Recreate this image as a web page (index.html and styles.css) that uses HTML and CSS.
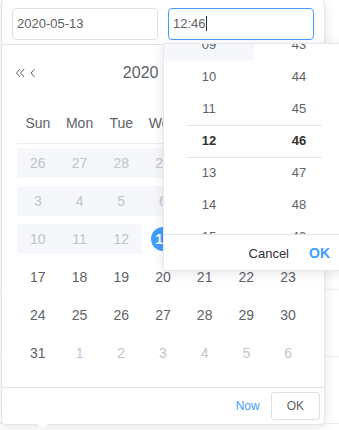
FILE: index.html
```html
<!DOCTYPE html>
<html>
<head>
  <title>Date Time Picker</title>
  <link rel="stylesheet" href="styles.css">
</head>
<body>
  <div class="page">
    <div class="page-row"></div>
    <div class="page-row"></div>
    <div class="page-row"></div>
  </div>

  <div class="picker">
    <div class="time-header">
      <div class="editor-wrap">
        <div class="editor">2020-05-13</div>
      </div>
      <div class="editor-wrap time-wrap">
        <div class="editor is-focus">12:46<span class="caret"></span></div>

        <div class="time-panel">
          <div class="time-content">
            <ul class="spinner">
              <li class="hover">09</li>
              <li>10</li>
              <li>11</li>
              <li class="active">12</li>
              <li>13</li>
              <li>14</li>
              <li>15</li>
            </ul>
            <ul class="spinner">
              <li>43</li>
              <li>44</li>
              <li>45</li>
              <li class="active">46</li>
              <li>47</li>
              <li>48</li>
              <li>49</li>
            </ul>
          </div>
          <div class="time-footer">
            <button class="time-btn">Cancel</button>
            <button class="time-btn confirm">OK</button>
          </div>
        </div>
      </div>
    </div>

    <div class="date-header">
      <div class="icon-group">
        <button class="icon-btn">
          <svg width="12" height="12" viewBox="0 0 12 12"><path d="M6 2 L2.5 6 L6 10 M10 2 L6.5 6 L10 10" fill="none" stroke="#606266" stroke-width="1"/></svg>
        </button>
        <button class="icon-btn">
          <svg width="12" height="12" viewBox="0 0 12 12"><path d="M7.5 2 L4 6 L7.5 10" fill="none" stroke="#606266" stroke-width="1"/></svg>
        </button>
      </div>
      <div class="header-title">
        <span class="header-label">2020</span> <span class="header-label">May</span>
      </div>
      <div class="icon-group">
        <button class="icon-btn">
          <svg width="12" height="12" viewBox="0 0 12 12"><path d="M4.5 2 L8 6 L4.5 10" fill="none" stroke="#606266" stroke-width="1"/></svg>
        </button>
        <button class="icon-btn">
          <svg width="12" height="12" viewBox="0 0 12 12"><path d="M2 2 L5.5 6 L2 10 M6 2 L9.5 6 L6 10" fill="none" stroke="#606266" stroke-width="1"/></svg>
        </button>
      </div>
    </div>

    <div class="panel-content">
      <table class="date-table">
        <tr>
          <th>Sun</th><th>Mon</th><th>Tue</th><th>Wed</th><th>Thu</th><th>Fri</th><th>Sat</th>
        </tr>
        <tr>
          <td class="disabled"><div><span>26</span></div></td>
          <td class="disabled"><div><span>27</span></div></td>
          <td class="disabled"><div><span>28</span></div></td>
          <td class="disabled"><div><span>29</span></div></td>
          <td class="disabled"><div><span>30</span></div></td>
          <td class="disabled"><div><span>1</span></div></td>
          <td class="disabled"><div><span>2</span></div></td>
        </tr>
        <tr>
          <td class="disabled"><div><span>3</span></div></td>
          <td class="disabled"><div><span>4</span></div></td>
          <td class="disabled"><div><span>5</span></div></td>
          <td class="disabled"><div><span>6</span></div></td>
          <td class="disabled"><div><span>7</span></div></td>
          <td class="disabled"><div><span>8</span></div></td>
          <td class="disabled"><div><span>9</span></div></td>
        </tr>
        <tr>
          <td class="disabled"><div><span>10</span></div></td>
          <td class="disabled"><div><span>11</span></div></td>
          <td class="disabled"><div><span>12</span></div></td>
          <td class="current"><div><span>13</span></div></td>
          <td><div><span>14</span></div></td>
          <td><div><span>15</span></div></td>
          <td><div><span>16</span></div></td>
        </tr>
        <tr>
          <td><div><span>17</span></div></td>
          <td><div><span>18</span></div></td>
          <td><div><span>19</span></div></td>
          <td><div><span>20</span></div></td>
          <td><div><span>21</span></div></td>
          <td><div><span>22</span></div></td>
          <td><div><span>23</span></div></td>
        </tr>
        <tr>
          <td><div><span>24</span></div></td>
          <td><div><span>25</span></div></td>
          <td><div><span>26</span></div></td>
          <td><div><span>27</span></div></td>
          <td><div><span>28</span></div></td>
          <td><div><span>29</span></div></td>
          <td><div><span>30</span></div></td>
        </tr>
        <tr>
          <td><div><span>31</span></div></td>
          <td class="next-month"><div><span>1</span></div></td>
          <td class="next-month"><div><span>2</span></div></td>
          <td class="next-month"><div><span>3</span></div></td>
          <td class="next-month"><div><span>4</span></div></td>
          <td class="next-month"><div><span>5</span></div></td>
          <td class="next-month"><div><span>6</span></div></td>
        </tr>
      </table>
    </div>

    <div class="panel-footer">
      <button class="link-btn">Now</button>
      <button class="ok-btn">OK</button>
    </div>

    <div class="arrow"></div>
  </div>
</body>
</html>
```

FILE: styles.css
```css
html, body {
  overflow: hidden;
}
body {
  margin: 0;
  width: 339px;
  height: 430px;
  position: relative;
  font-family: "Liberation Sans", Arial, sans-serif;
  background-color: #fff;
}
.page {
  padding-top: 223px;
}
.page-row {
  height: 66px;
  border-bottom: 1px solid #ebeef5;
}
.picker {
  position: absolute;
  left: 1px;
  top: -1px;
  width: 322px;
  background-color: #fff;
  border: 1px solid #e4e7ed;
  border-radius: 4px;
  box-shadow: 0 2px 12px 0 rgba(0, 0, 0, 0.1);
  color: #606266;
}
.time-header {
  display: flex;
  padding: 8px 5px 4px;
  border-bottom: 1px solid #e4e4e4;
}
.editor-wrap {
  flex: 1;
  padding: 0 5px;
}
.time-wrap {
  position: relative;
}
.editor {
  height: 32px;
  box-sizing: border-box;
  border: 1px solid #dcdfe6;
  border-radius: 4px;
  padding: 0 4px;
  font-size: 13px;
  line-height: 30px;
  color: #606266;
}
.editor.is-focus {
  border-color: #409eff;
}
.caret {
  display: inline-block;
  width: 1px;
  height: 15px;
  background-color: #303133;
  vertical-align: -3px;
}
.time-panel {
  position: absolute;
  left: 0;
  top: calc(100% + 3px);
  z-index: 10;
  width: 180px;
  background-color: #fff;
  border: 1px solid #e4e7ed;
  border-radius: 2px;
  box-shadow: 0 2px 12px 0 rgba(0, 0, 0, 0.1);
}
.time-content {
  position: relative;
  display: flex;
  height: 190px;
  overflow: hidden;
}
.time-content:before {
  content: "";
  position: absolute;
  left: 12%;
  right: 12%;
  top: 81px;
  height: 33px;
  box-sizing: border-box;
  border-top: 1px solid #e4e7ed;
  border-bottom: 1px solid #e4e7ed;
}
.spinner {
  flex: 1;
  list-style: none;
  margin: -15px 0 0;
  padding: 0;
}
.spinner li {
  height: 32px;
  line-height: 32px;
  text-align: center;
  font-size: 13px;
  color: #606266;
}
.spinner li.hover {
  background-color: #f5f7fa;
}
.spinner li.active {
  font-weight: bold;
  color: #303133;
}
.time-footer {
  border-top: 1px solid #e4e4e4;
  padding: 4px;
  height: 36px;
  box-sizing: border-box;
  text-align: right;
  font-size: 0;
}
.time-btn {
  border: none;
  background: transparent;
  padding: 0 5px;
  margin: 0 5px;
  line-height: 28px;
  font-family: inherit;
  font-size: 13px;
  color: #303133;
}
.time-btn.confirm {
  font-weight: 800;
  font-size: 14px;
  color: #409eff;
}
.date-header {
  display: flex;
  align-items: center;
  height: 32px;
  margin: 12px;
}
.icon-group {
  display: flex;
  width: 26px;
}
.icon-btn {
  background: transparent;
  border: none;
  padding: 0;
  margin-right: 1px;
  width: 12px;
  height: 12px;
  display: flex;
}
.header-title {
  flex: 1;
  text-align: center;
  font-size: 16px;
  line-height: 22px;
  color: #606266;
}
.header-label {
  padding: 0 5px;
}
.panel-content {
  margin: 15px;
}
.date-table {
  width: 100%;
  table-layout: fixed;
  border-collapse: separate;
  border-spacing: 0;
  font-size: 14px;
}
.date-table th {
  padding: 5px 0;
  line-height: 29px;
  font-weight: 400;
  color: #606266;
  border-bottom: 1px solid #ebeef5;
}
.date-table td {
  padding: 4px 0;
  text-align: center;
}
.date-table td div {
  height: 30px;
  padding: 3px 0;
  box-sizing: border-box;
}
.date-table td span {
  display: block;
  width: 24px;
  height: 24px;
  line-height: 24px;
  margin: 0 auto;
  border-radius: 50%;
  color: #606266;
}
.date-table td.disabled div {
  background-color: #f5f7fa;
}
.date-table td.disabled span,
.date-table td.next-month span {
  color: #c0c4cc;
}
.date-table td.current span {
  background-color: #409eff;
  color: #fff;
  font-weight: bold;
}
.panel-footer {
  display: flex;
  justify-content: flex-end;
  align-items: center;
  border-top: 1px solid #e4e4e4;
  padding: 4px;
}
.link-btn,
.ok-btn {
  height: 28px;
  box-sizing: border-box;
  font-family: inherit;
  font-size: 12px;
  line-height: 1;
  border-radius: 3px;
}
.link-btn {
  padding: 7px 0;
  margin-right: 10px;
  border: 1px solid transparent;
  background: transparent;
  color: #409eff;
}
.ok-btn {
  padding: 7px 15px;
  border: 1px solid #dcdfe6;
  background-color: #fff;
  color: #606266;
}
.arrow {
  position: absolute;
  left: 35px;
  bottom: -6px;
  width: 0;
  height: 0;
  border-left: 6px solid transparent;
  border-right: 6px solid transparent;
  border-top: 6px solid #ebeef5;
}
.arrow:after {
  content: "";
  position: absolute;
  left: -6px;
  top: -7px;
  border-left: 6px solid transparent;
  border-right: 6px solid transparent;
  border-top: 6px solid #fff;
}
```
